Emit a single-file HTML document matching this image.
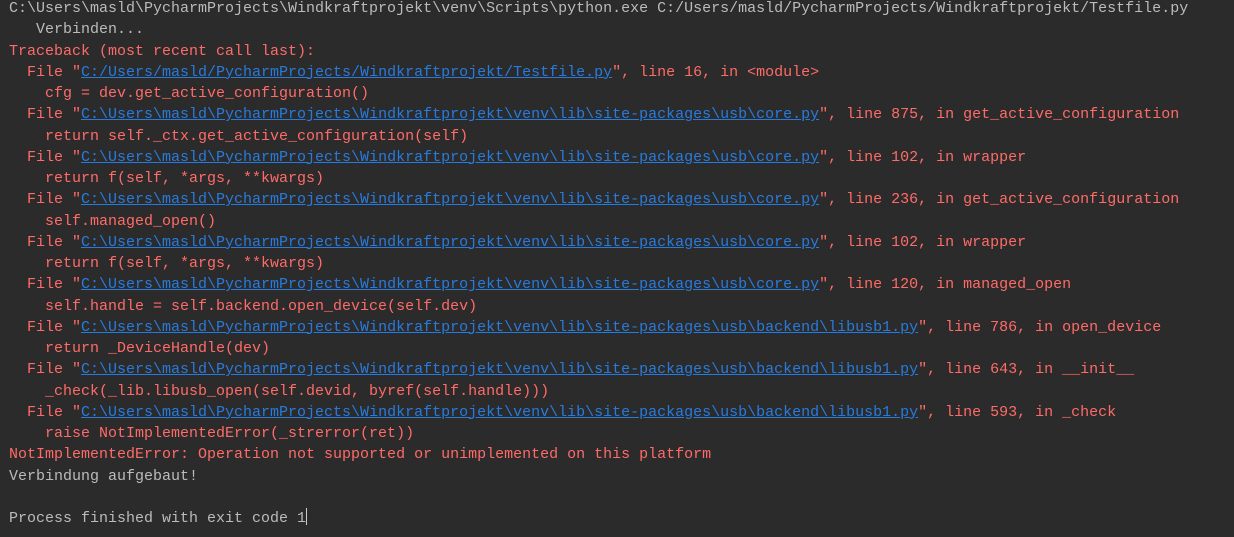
<!DOCTYPE html>
<html><head><meta charset="utf-8"><style>
html,body{margin:0;padding:0;background:#2b2b2b;width:1234px;height:537px;overflow:hidden}
pre{margin:0;position:absolute;left:9px;top:-2px;font-family:"Liberation Mono",monospace;font-size:15px;line-height:21.25px;color:#bbbbbb;white-space:pre}
.r{color:#ff6b68}
a{color:#287bde;text-decoration:underline}
.c{display:inline-block;width:1px;height:17px;background:#ccc;vertical-align:-3px}
</style></head><body>
<pre>C:\Users\masld\PycharmProjects\Windkraftprojekt\venv\Scripts\python.exe C:/Users/masld/PycharmProjects/Windkraftprojekt/Testfile.py
   Verbinden...
<span class="r">Traceback (most recent call last):
  File "<a>C:/Users/masld/PycharmProjects/Windkraftprojekt/Testfile.py</a>", line 16, in &lt;module&gt;
    cfg = dev.get_active_configuration()
  File "<a>C:\Users\masld\PycharmProjects\Windkraftprojekt\venv\lib\site-packages\usb\core.py</a>", line 875, in get_active_configuration
    return self._ctx.get_active_configuration(self)
  File "<a>C:\Users\masld\PycharmProjects\Windkraftprojekt\venv\lib\site-packages\usb\core.py</a>", line 102, in wrapper
    return f(self, *args, **kwargs)
  File "<a>C:\Users\masld\PycharmProjects\Windkraftprojekt\venv\lib\site-packages\usb\core.py</a>", line 236, in get_active_configuration
    self.managed_open()
  File "<a>C:\Users\masld\PycharmProjects\Windkraftprojekt\venv\lib\site-packages\usb\core.py</a>", line 102, in wrapper
    return f(self, *args, **kwargs)
  File "<a>C:\Users\masld\PycharmProjects\Windkraftprojekt\venv\lib\site-packages\usb\core.py</a>", line 120, in managed_open
    self.handle = self.backend.open_device(self.dev)
  File "<a>C:\Users\masld\PycharmProjects\Windkraftprojekt\venv\lib\site-packages\usb\backend\libusb1.py</a>", line 786, in open_device
    return _DeviceHandle(dev)
  File "<a>C:\Users\masld\PycharmProjects\Windkraftprojekt\venv\lib\site-packages\usb\backend\libusb1.py</a>", line 643, in __init__
    _check(_lib.libusb_open(self.devid, byref(self.handle)))
  File "<a>C:\Users\masld\PycharmProjects\Windkraftprojekt\venv\lib\site-packages\usb\backend\libusb1.py</a>", line 593, in _check
    raise NotImplementedError(_strerror(ret))
NotImplementedError: Operation not supported or unimplemented on this platform</span>
Verbindung aufgebaut!

Process finished with exit code 1<span class="c"></span></pre>
</body></html>
